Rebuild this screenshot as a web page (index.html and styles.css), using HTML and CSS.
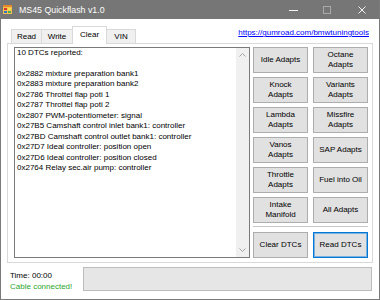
FILE: index.html
```html
<!DOCTYPE html>
<html>
<head>
<meta charset="utf-8">
<link rel="stylesheet" href="styles.css">
</head>
<body>
<div class="window">
  <div class="titlebar">
    <svg class="appicon" viewBox="0 0 9 9" width="9" height="9">
      <rect x="0" y="0" width="9" height="9" fill="#f2c14e"/>
      <rect x="0" y="0" width="9" height="2" fill="#e58a2a"/>
      <rect x="1" y="3" width="3" height="2" fill="#d9342b"/>
      <rect x="5" y="3" width="3" height="2" fill="#f7e04a"/>
      <rect x="1" y="6" width="3" height="2" fill="#2f6fd0"/>
      <rect x="5" y="6" width="3" height="2" fill="#4caf50"/>
    </svg>
    <span class="title">MS45 Quickflash v1.0</span>
    <div class="controls">
      <svg class="ctl-min" viewBox="0 0 9 1" width="9" height="1"><rect width="9" height="1" fill="#f4f4f4"/></svg>
      <svg class="ctl-max" viewBox="0 0 8 8" width="8" height="8"><rect x="0.5" y="0.5" width="7" height="7" fill="none" stroke="#a9a9a9"/></svg>
      <svg class="ctl-close" viewBox="0 0 8 8" width="8" height="8"><path d="M0.5 0.5 L7.5 7.5 M7.5 0.5 L0.5 7.5" stroke="#f4f4f4" stroke-width="1"/></svg>
    </div>
  </div>
  <div class="client">
    <div class="tabsrow">
      <div class="tabs">
        <div class="tab w-read">Read</div>
        <div class="tab w-write">Write</div>
        <div class="tab sel w-clear">Clear</div>
        <div class="tab w-vin">VIN</div>
      </div>
      <a class="link">https://gumroad.com/bmwtuningtools</a>
    </div>
    <div class="page">
      <div class="textbox">
        <div class="text">10 DTCs reported:

0x2882 mixture preparation bank1
0x2883 mixture preparation bank2
0x2786 Throttel flap poti 1
0x2787 Throttel flap poti 2
0x2807 PWM-potentiometer: signal
0x27B5 Camshaft control inlet bank1: controller
0x27BD Camshaft control outlet bank1: controller
0x27D7 Ideal controller: position open
0x27D6 Ideal controller: position closed
0x2764 Relay sec.air pump: controller</div>
        <div class="scroll">
          <svg class="arrow" viewBox="0 0 7 4" width="7" height="4"><path d="M0.5 3.5 L3.5 0.5 L6.5 3.5" fill="none" stroke="#a3a3a3"/></svg>
          <svg class="arrow" viewBox="0 0 7 4" width="7" height="4"><path d="M0.5 0.5 L3.5 3.5 L6.5 0.5" fill="none" stroke="#a3a3a3"/></svg>
        </div>
      </div>
      <div class="side">
        <div class="grid">
          <div class="btn">Idle Adapts</div>
          <div class="btn">Octane<br>Adapts</div>
          <div class="btn">Knock<br>Adapts</div>
          <div class="btn">Variants<br>Adapts</div>
          <div class="btn">Lambda<br>Adapts</div>
          <div class="btn">Missfire<br>Adapts</div>
          <div class="btn">Vanos<br>Adapts</div>
          <div class="btn">SAP Adapts</div>
          <div class="btn">Throttle<br>Adapts</div>
          <div class="btn">Fuel into Oil</div>
          <div class="btn">Intake<br>Manifold</div>
          <div class="btn">All Adapts</div>
        </div>
        <div class="sep"></div>
        <div class="grid">
          <div class="btn">Clear DTCs</div>
          <div class="btn focus">Read DTCs</div>
        </div>
      </div>
    </div>
    <div class="status">
      <div class="labels">
        <div>Time: 00:00</div>
        <div class="green">Cable connected!</div>
      </div>
      <div class="progress"></div>
    </div>
  </div>
</div>
</body>
</html>
```

FILE: styles.css
```css
html, body {
  margin: 0;
  padding: 0;
  background: #fff;
}
body {
  font-family: "Liberation Sans", Arial, sans-serif;
  font-size: 8px;
  color: #000;
}
.window {
  width: 380px;
  height: 300px;
  box-sizing: border-box;
  border: 1px solid #7a7a7a;
  border-top: 0;
  display: flex;
  flex-direction: column;
  background: #fff;
}
.titlebar {
  height: 19px;
  flex: none;
  background: #767676;
  display: flex;
  align-items: center;
  color: #fff;
}
.appicon {
  margin-left: 2px;
  display: block;
}
.title {
  margin-left: 7px;
  font-size: 8.8px;
}
.controls {
  margin-left: auto;
  display: flex;
  align-items: center;
}
.controls svg {
  display: block;
}
.ctl-min {
  margin-right: 25px;
  margin-top: 2px;
}
.ctl-max {
  margin-right: 27px;
}
.ctl-close {
  margin-right: 13px;
}
.client {
  flex: 1;
  padding: 7px 6px 0;
  display: flex;
  flex-direction: column;
}
.tabsrow {
  height: 17px;
  flex: none;
  display: flex;
  align-items: flex-end;
  padding: 0 4px;
}
.tabs {
  display: flex;
  align-items: flex-end;
}
.tab {
  height: 14px;
  box-sizing: border-box;
  border: 1px solid #d9d9d9;
  border-bottom: 0;
  background: #f0f0f0;
  display: flex;
  align-items: center;
  justify-content: center;
  margin-right: -1px;
}
.tab.sel {
  height: 18px;
  margin-bottom: -1px;
  background: #fff;
  position: relative;
  z-index: 1;
  padding-bottom: 2px;
}
.w-read { width: 31px; }
.w-write { width: 32px; }
.w-clear { width: 35px; }
.w-vin { width: 30px; }
.link {
  margin-left: auto;
  align-self: flex-start;
  margin-top: 2px;
  line-height: 10px;
  color: #0000ff;
  text-decoration: underline;
}
.page {
  height: 220px;
  flex: none;
  box-sizing: border-box;
  border: 1px solid #d9d9d9;
  padding: 3px 4px 4px 6px;
  display: flex;
  gap: 3px;
  background: #fff;
}
.textbox {
  width: 236px;
  box-sizing: border-box;
  border: 1px solid #7a7a7a;
  display: flex;
}
.text {
  flex: 1;
  padding: 0 2px;
  line-height: 10.45px;
  white-space: pre;
  overflow: hidden;
}
.scroll {
  width: 13px;
  background: #f0f0f0;
  display: flex;
  flex-direction: column;
  justify-content: space-between;
  align-items: center;
  padding: 5px 0;
}
.arrow {
  display: block;
}
.side {
  width: 115px;
  display: flex;
  flex-direction: column;
}
.grid {
  display: grid;
  grid-template-columns: 55px 55px;
  column-gap: 5px;
  row-gap: 4px;
}
.btn {
  height: 26px;
  box-sizing: border-box;
  border: 1px solid #adadad;
  background: #e1e1e1;
  display: flex;
  align-items: center;
  justify-content: center;
  text-align: center;
  line-height: 10px;
}
.btn.focus {
  border-color: #0078d7;
  box-shadow: inset 0 0 0 1px rgba(0, 120, 215, 0.45);
}
.sep {
  border-top: 1px solid #c8c8c8;
  margin: 3px 0 5px;
}
.status {
  display: flex;
  margin-top: 4px;
  height: 24px;
  flex: none;
}
.labels {
  width: 76px;
  box-sizing: border-box;
  padding: 3px 0 0 3px;
  line-height: 11px;
}
.green {
  color: #2da52d;
}
.progress {
  flex: 1;
  border: 1px solid #bcbcbc;
  background: #e6e6e6;
  margin-right: 1px;
}
```
